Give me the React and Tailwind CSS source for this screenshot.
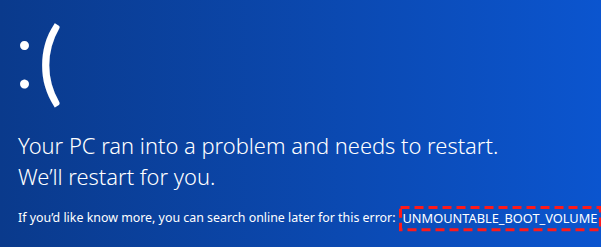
export default function App() {
    return (
        <div className="w-[601px] h-[247px] overflow-hidden bg-gradient-to-r from-[#0a3a8c] to-[#0b55cf] text-white font-['Noto_Sans',sans-serif] pl-[18px]">
            {/* sad face */}
            <div className="h-[130px] flex items-start font-['Lato',sans-serif] font-light leading-none">
                <span className="-ml-[5px] mt-[3px] text-[96px]">:</span>
                <span className="ml-[2px] mt-[13px] text-[92px] font-normal">(</span>
            </div>
            <div className="text-[21.9px] leading-[31px] font-light">
                <p>Your PC ran into a problem and needs to restart.</p>
                <p>We’ll restart for you.</p>
            </div>
            <div className="mt-[14px] flex items-center text-[12.4px] whitespace-nowrap">
                <span>If you’d like know more, you can search online later for this error:</span>
                <span className="relative ml-[3px] px-[4px] py-[3px] text-[12.8px]">
                    UNMOUNTABLE_BOOT_VOLUME
                    <svg className="absolute inset-0 w-full h-full overflow-visible">
                        <rect x="1.5" y="1.5" width="calc(100% - 3px)" height="calc(100% - 3px)" fill="none" stroke="#ff1a1a" strokeWidth="3" strokeDasharray="9 5" />
                    </svg>
                </span>
            </div>
        </div>
    )
}
